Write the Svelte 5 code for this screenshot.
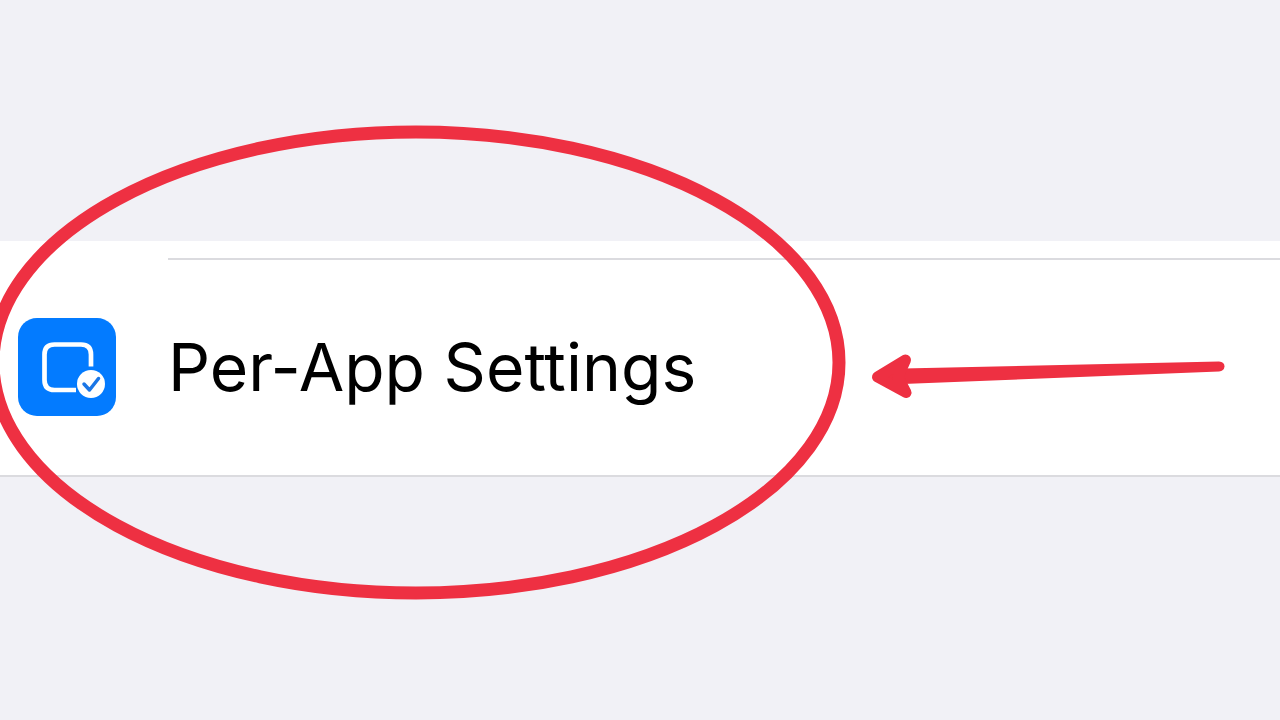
<script lang="ts">
	const rows = [{ title: 'Per-App Settings', href: '#per-app-settings' }];
</script>

<svelte:head>
	<title>Per-App Settings</title>
</svelte:head>

<main class="screen">
	<nav class="group">
		{#each rows as row}
			<a class="row" href={row.href}>
				<svg class="icon" viewBox="0 0 98 98" aria-hidden="true">
					<rect width="98" height="98" rx="19" fill="#037bff" />
					<path
						d="M58 72H36.5Q26.500 72 26.500 62V36.500Q26.500 26.500 36.500 26.500H63Q73 26.500 73 36.500V48.500"
						fill="none"
						stroke="#fff"
						stroke-width="4.700"
					/>
					<circle cx="73" cy="66" r="15.500" fill="#037bff" />
					<circle cx="73" cy="66" r="14" fill="#fff" />
					<path
						d="M66 66L71.500 72L80.500 60.500"
						fill="none"
						stroke="#1a76e6"
						stroke-width="3.500"
						stroke-linecap="round"
						stroke-linejoin="round"
					/>
				</svg>
				<span class="title">{row.title}</span>
			</a>
		{/each}
	</nav>

	<!-- hand-drawn highlight over the row -->
	<svg class="markup" viewBox="0 0 1280 720" aria-hidden="true">
		<ellipse cx="416" cy="362.5" rx="423" ry="230.500" fill="none" stroke="#ee3042" stroke-width="13" />
		<g fill="#ee3042" stroke="#ee3042" stroke-linecap="round" stroke-linejoin="round">
			<path d="M903 368.500L1219 361.500Q1224.500 362 1224.500 366.500Q1224 371 1219 371.500L903 384Z" stroke="none" />
			<path d="M905.500 360L877.500 377L906 392.500L898 377Z" stroke-width="11" />
		</g>
	</svg>
</main>

<style>
	:global(body) {
		margin: 0;
		background: #f1f1f6;
	}

	.screen {
		position: relative;
		min-height: 100vh;
		box-sizing: border-box;
		padding-top: 241px;
		overflow: hidden;
		font-family: Inter, 'Liberation Sans', sans-serif;
	}

	.group {
		padding-top: 17px;
		background: #fff;
		border-bottom: 2px solid #dbdbdf;
	}

	/* separator starts at the title, not under the icon */
	.group::before {
		content: '';
		display: block;
		height: 2px;
		margin-left: 168px;
		background: #dbdbdf;
	}

	.row {
		display: flex;
		align-items: center;
		gap: 52px;
		padding: 58px 18px 59px;
		color: #000;
		text-decoration: none;
	}

	.icon {
		flex: none;
		width: 98px;
		height: 98px;
	}

	.title {
		font-size: 66px;
		line-height: 80px;
		white-space: nowrap;
	}

	.markup {
		position: absolute;
		top: 0;
		left: 0;
		width: 100%;
		pointer-events: none;
	}
</style>
